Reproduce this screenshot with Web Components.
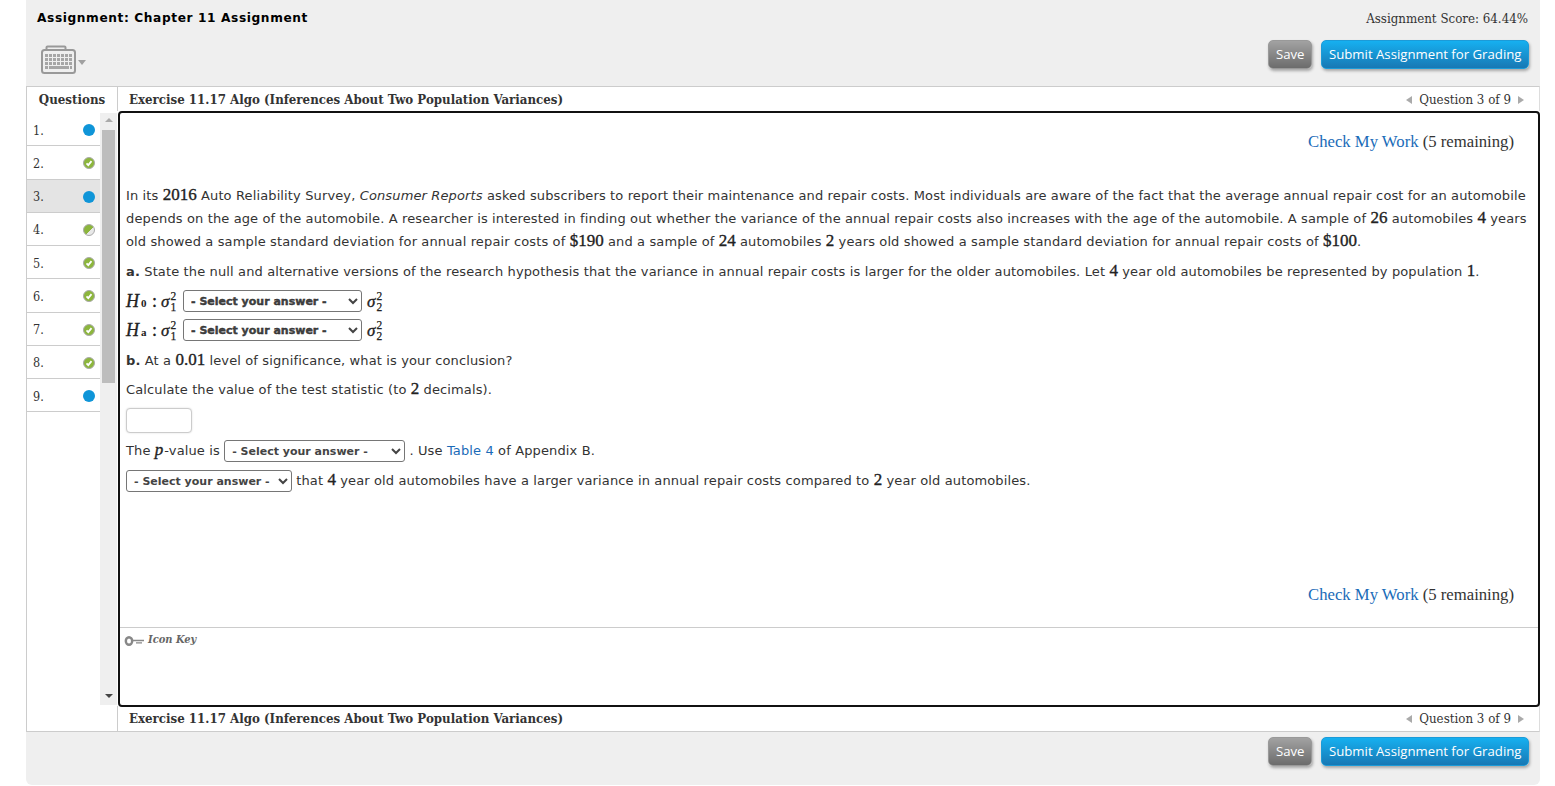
<!DOCTYPE html>
<html>
<head>
<meta charset="utf-8">
<title>Chapter 11 Assignment</title>
<style>
  html, body { margin: 0; background: #fff; }
  body { font-family: "DejaVu Sans", Verdana, sans-serif; color: #333; }
</style>
</head>
<body>
<cx-assignment>
  <cx-top-bar title-text="Assignment: Chapter 11 Assignment" score="Assignment Score: 64.44%"></cx-top-bar>
  <cx-title-row></cx-title-row>
  <cx-workspace>
    <cx-question-list slot="list"></cx-question-list>
    <cx-question-panel slot="panel">
      <cx-check-work></cx-check-work>
      <div style="height:32px"></div>
      <cx-para gap="7">
        <cx-line>In its <cx-n>2016</cx-n> Auto Reliability Survey, <i>Consumer Reports</i> asked subscribers to report their maintenance and repair costs. Most individuals are aware of the fact that the average annual repair cost for an automobile</cx-line>
        <cx-line>depends on the age of the automobile. A researcher is interested in finding out whether the variance of the annual repair costs also increases with the age of the automobile. A sample of <cx-n>26</cx-n> automobiles <cx-n>4</cx-n> years</cx-line>
        <cx-line>old showed a sample standard deviation for annual repair costs of <cx-n>$190</cx-n> and a sample of <cx-n>24</cx-n> automobiles <cx-n>2</cx-n> years old showed a sample standard deviation for annual repair costs of <cx-n>$100</cx-n>.</cx-line>
      </cx-para>
      <cx-para gap="7"><b>a.</b> State the null and alternative versions of the research hypothesis that the variance in annual repair costs is larger for the older automobiles. Let <cx-n>4</cx-n> year old automobiles be represented by population <cx-n>1</cx-n>.</cx-para>
      <cx-hypothesis sub="0"></cx-hypothesis>
      <cx-hypothesis sub="a" last></cx-hypothesis>
      <cx-para gap="6"><b>b.</b> At a <cx-n>0.01</cx-n> level of significance, what is your conclusion?</cx-para>
      <cx-para gap="7">Calculate the value of the test statistic (to <cx-n>2</cx-n> decimals).</cx-para>
      <cx-answer-box></cx-answer-box>
      <cx-para gap="7">The <cx-n italic>p</cx-n>-value is <cx-select width="181"></cx-select> . Use <cx-link>Table 4</cx-link> of Appendix B.</cx-para>
      <cx-para gap="0"><cx-select width="166"></cx-select> that <cx-n>4</cx-n> year old automobiles have a larger variance in annual repair costs compared to <cx-n>2</cx-n> year old automobiles.</cx-para>
      <div style="flex:1"></div>
      <cx-check-work></cx-check-work>
      <cx-icon-key></cx-icon-key>
    </cx-question-panel>
  </cx-workspace>
  <cx-title-row bottom></cx-title-row>
  <cx-bottom-bar></cx-bottom-bar>
</cx-assignment>

<script>
const serif = `"DejaVu Serif Condensed", "DejaVu Serif", Georgia, serif`;
const verdana = `"DejaVu Sans", Verdana, sans-serif`;
const math = `"Liberation Serif", serif`;

function define(name, css, html, setup) {
  customElements.define(name, class extends HTMLElement {
    constructor() {
      super();
      this.attachShadow({ mode: "open" });
    }
    connectedCallback() {
      const body = typeof html === "function" ? html(this) : html;
      this.shadowRoot.innerHTML = `<style>${css}</style>${body}`;
      if (setup) setup(this);
    }
  });
}

define("cx-assignment", `
  :host { display: block; width: 1514px; height: 785px; margin-left: 26px; background: #efefef; border-radius: 0 0 6px 6px; }
`, `<slot></slot>`);

define("cx-button", `
  :host { display: inline-block; }
  button {
    height: 29px; padding: 0 7px 1px; border-radius: 5px; font: 13.200px "Open Sans", sans-serif; color: #fff; cursor: pointer;
    box-shadow: 1px 2px 3px rgba(0,0,0,.3); border: 1px solid #999;
    background: linear-gradient(#a2a2a2, #6c6c6c);
  }
  :host([primary]) button { padding: 0 6.500px 1px; background: linear-gradient(#16b0f0, #1878b4); border-color: #1c9bd8; }
`, el => `<button>${el.getAttribute("label")}</button>`);

define("cx-actions", `
  :host { display: flex; justify-content: flex-end; gap: 9px; padding-right: 11px; }
`, `<cx-button label="Save"></cx-button><cx-button primary label="Submit Assignment for Grading"></cx-button>`);

define("cx-top-bar", `
  :host { display: block; height: 86px; box-sizing: border-box; position: relative; }
  .row { display: flex; justify-content: space-between; align-items: flex-start; padding: 11px 12px 0 11px; height: 19px; }
  h1 { margin: 0; font: bold 12.200px/15px ${verdana}; color: #000; letter-spacing: .6px; }
  .score { font: 13.200px/15px ${serif}; font-stretch: condensed; color: #333; }
  .tools { display: flex; justify-content: space-between; align-items: flex-start; padding: 9px 0 0 15px; }
  cx-actions { margin-top: 1px; }
  svg { display: block; margin-top: 6px; }
`, el => `
  <div class="row"><h1>${el.getAttribute("title-text")}</h1><div class="score">${el.getAttribute("score")}</div></div>
  <div class="tools">
    <svg width="46" height="30" viewBox="0 0 46 30">
      <path d="M5.500 5V2.500a1 1 0 0 1 1-1h17a1 1 0 0 1 1 1V5" fill="none" stroke="#999" stroke-width="2"/>
      <rect x="1" y="5" width="33" height="23" rx="2.500" fill="#efefef" stroke="#999" stroke-width="2"/>
      <g fill="#a6a6a6">
        <rect x="4" y="9" width="27" height="3"/><rect x="4" y="13" width="27" height="3"/>
        <rect x="4" y="17" width="27" height="3"/><rect x="8" y="21" width="20" height="3"/>
        <rect x="4" y="21" width="3" height="3"/><rect x="29" y="21" width="2" height="3"/>
      </g>
      <path d="M7.500 9v11M11.500 9v11M15.500 9v11M19.500 9v11M23.500 9v11M27.500 9v11" stroke="#efefef"/>
      <path d="M37 15h8l-4 5z" fill="#a0a0a0"/>
    </svg>
    <cx-actions></cx-actions>
  </div>`);

define("cx-arrow", `
  :host { display: inline-block; width: 0; height: 0; border: 4px solid transparent; border-left-width: 0; border-right: 6px solid #aaa; }
  :host([next]) { border-right-width: 0; border-left: 6px solid #aaa; }
`, ``);

define("cx-title-row", `
  :host {
    display: grid; grid-template-columns: 91px 1fr; height: 26px; box-sizing: border-box; background: #fff;
    border: 1px solid #ccc; border-right-color: #ddd; font-family: ${serif};
  }
  :host([bottom]) { border-top: 0; height: 27px; padding-top: 1px; }
  .q { font: bold 13.200px/25px ${serif}; font-stretch: condensed; color: #333; text-align: center; border-right: 1px solid #ccc; }
  .ex { display: flex; justify-content: space-between; align-items: center; padding: 0 15px 0 11px; }
  .ex b { font: bold 13.170px ${serif}; font-stretch: condensed; color: #333; }
  .nav { display: flex; align-items: center; gap: 7px; font: 13.200px ${serif}; font-stretch: condensed; color: #333; }
`, el => `
  <div class="q">${el.hasAttribute("bottom") ? "" : "Questions"}</div>
  <div class="ex">
    <b>Exercise 11.17 Algo (Inferences About Two Population Variances)</b>
    <div class="nav"><cx-arrow></cx-arrow>Question 3 of 9<cx-arrow next></cx-arrow></div>
  </div>`);

define("cx-workspace", `
  :host { display: grid; grid-template-columns: 92px 1fr; height: 594px; margin-top: -1px; background: #fff; position: relative; }
`, `<slot name="list"></slot><slot name="panel"></slot>`);

define("cx-status", `
  :host { display: block; width: 14px; height: 14px; }
  svg { display: block; }
`, el => {
  const kind = el.getAttribute("kind");
  if (kind === "open") return `<svg width="14" height="14"><circle cx="7" cy="7" r="6" fill="#0f95d8"/></svg>`;
  if (kind === "part") return `<svg width="14" height="14"><defs><linearGradient id="g" x1="0" y1="0" x2="1" y2="1"><stop offset=".55" stop-color="#8cb63c"/><stop offset=".55" stop-color="#e8e8e8"/></linearGradient></defs><circle cx="7" cy="7" r="5.500" fill="url(#g)" stroke="#aaa"/></svg>`;
  return `<svg width="14" height="14"><circle cx="7" cy="7" r="5.500" fill="#8cb63c" stroke="#aaa"/><path d="M4.500 7.300l1.800 1.800 3.200-4" fill="none" stroke="#fff" stroke-width="1.800"/></svg>`;
});

define("cx-question-item", `
  :host { display: flex; align-items: center; justify-content: space-between; height: 33.250px; box-sizing: border-box; padding: 2px 4px 0 6px; border-bottom: 1px solid #ccc; font: 12.500px ${serif}; font-stretch: condensed; color: #333; }
  :host([current]) { background: #e4e4e4; }
`, el => `<span>${el.getAttribute("n")}.</span><cx-status kind="${el.getAttribute("kind")}"></cx-status>`);

define("cx-question-list", `
  :host { display: grid; grid-template-columns: 73px 17px; border-left: 1px solid #ccc; height: 594px; box-sizing: border-box; }
  .track { background: #efefef; display: flex; flex-direction: column; align-items: center; justify-content: space-between; position: relative; margin-top: 2px; }
  .up, .down { width: 0; height: 0; border: 4px solid transparent; border-top: 0; border-bottom: 4px solid #aaa; margin: 5px 0; }
  .down { border-bottom: 0; border-top: 4px solid #444; margin: 7px 0; }
  .thumb { background: #bdbdbd; width: 13px; height: 253px; position: absolute; top: 17px; }
  .rows { padding-top: 2px; }
`, () => {
  const kinds = ["open","ok","open","part","ok","ok","ok","ok","open"];
  return `<div class="rows">${kinds.map((k, i) => `<cx-question-item n="${i + 1}" kind="${k}" ${i === 2 ? "current" : ""}></cx-question-item>`).join("")}</div>
    <div class="track"><div class="up"></div><div class="thumb"></div><div class="down"></div></div>`;
});

define("cx-question-panel", `
  :host { display: flex; flex-direction: column; height: 596px; box-sizing: border-box; border: 2px solid #111; border-radius: 4px; padding: 0 0 0 6px; background: #fff; position: relative; }
  ::slotted(*) { flex: none; }
`, `<slot></slot>`);

define("cx-check-work", `
  :host { display: block; text-align: right; padding: 18px 24px 0 0; font: 16.700px/21px ${math}; color: #333; }
  a { color: #1a6bb8; text-decoration: none; }
`, `<a href="#">Check My Work</a> (5 remaining)`);

define("cx-para", `
  :host { display: block; font: 13px/23px ${verdana}; color: #333; letter-spacing: .13px; padding-right: 6px; }
`, `<slot></slot>`, el => { el.style.marginBottom = (el.getAttribute("gap") || 0) + "px"; });

define("cx-line", `
  :host { display: block; white-space: nowrap; }
`, `<slot></slot>`);

define("cx-n", `
  :host { font: 17px/1 ${math}; color: #222; -webkit-text-stroke: .35px #222; letter-spacing: 0; }
  :host([italic]) { font-style: italic; letter-spacing: 1px; }
`, `<slot></slot>`);

define("cx-link", `
  :host { color: #1a6bb8; }
`, `<slot></slot>`);

define("cx-select", `
  :host { display: inline-block; vertical-align: middle; }
  select {
    display: block; height: 22px; box-sizing: border-box; padding: 0 0 0 3px; font: bold 11px ${verdana}; color: #444;
    background: #fff; border: 1px solid #767676; border-radius: 3px; margin-top: -1px;
  }
`, el => `<select style="width:${el.getAttribute("width")}px"><option>- Select your answer -</option></select>`);

define("cx-sigma", `
  :host { display: inline-flex; align-items: center; width: 17px; font: italic 17px ${math}; color: #222; -webkit-text-stroke: .35px #222; }
  .s { display: inline-flex; flex-direction: column; font: 11.500px/10.500px ${math}; margin-left: 1px; -webkit-text-stroke: .25px #222; }
`, el => `σ<span class="s"><span>2</span><span>${el.getAttribute("sub")}</span></span>`);

define("cx-hypothesis", `
  :host { display: flex; align-items: center; height: 23px; gap: 5px; margin-bottom: 6px; font: italic 18px ${math}; color: #222; -webkit-text-stroke: .35px #222; }
  :host([last]) { margin-bottom: 7px; }
  .h { display: inline-flex; align-items: baseline; width: 21px; letter-spacing: 1px; }
  sub { font: bold 11px ${math}; vertical-align: baseline; margin-left: 1px; -webkit-text-stroke: 0; }
  .c { font-style: normal; width: 5px; margin-right: -1px; }
`, el => `<span class="h">H<sub>${el.getAttribute("sub")}</sub></span><span class="c">:</span><cx-sigma sub="1"></cx-sigma><cx-select width="179"></cx-select><cx-sigma sub="2"></cx-sigma>`);

define("cx-answer-box", `
  :host { display: block; margin-bottom: 6px; }
  input { display: block; width: 66px; height: 25px; box-sizing: border-box; border: 1px solid #ccc; border-radius: 4px; box-shadow: 0 0 2px rgba(0,0,0,.15); background: #fff; }
`, `<input type="text">`);

define("cx-icon-key", `
  :host { display: flex; gap: 4px; height: 78px; align-items: flex-start; padding: 4px 0 0 4px; margin: 22px 0 0 -6px; border-top: 1px solid #ccc; font: italic bold 11px/16px ${serif}; font-stretch: condensed; color: #666; box-sizing: border-box; }
  svg { display: block; margin-top: 2px; }
`, `<svg width="20" height="14" viewBox="0 0 20 14"><ellipse cx="5" cy="7" rx="3.200" ry="3.800" fill="none" stroke="#888" stroke-width="2.400"/><path d="M9 5.800h11v1.400H9zM12 8.200h6v1.300h-6z" fill="#888"/></svg><span>Icon Key</span>`);

define("cx-bottom-bar", `
  :host { display: block; padding-top: 5px; }
`, `<cx-actions></cx-actions>`);
</script>
</body>
</html>
